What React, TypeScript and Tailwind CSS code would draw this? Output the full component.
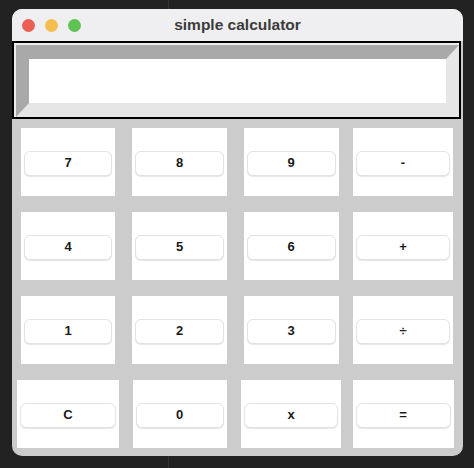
import React from "react";

const rows: { label: string; w: number }[][] = [
  [
    { label: "7", w: 94 },
    { label: "8", w: 95 },
    { label: "9", w: 95 },
    { label: "-", w: 100 },
  ],
  [
    { label: "4", w: 94 },
    { label: "5", w: 95 },
    { label: "6", w: 95 },
    { label: "+", w: 100 },
  ],
  [
    { label: "1", w: 94 },
    { label: "2", w: 95 },
    { label: "3", w: 95 },
    { label: "÷", w: 100 },
  ],
  [
    { label: "C", w: 102 },
    { label: "0", w: 94 },
    { label: "x", w: 100 },
    { label: "=", w: 101 },
  ],
];

export default function App() {
  return (
    <div
      className="relative w-[474px] h-[468px] bg-[#222222] overflow-hidden"
      style={{ fontFamily: '"Liberation Sans", Arial, sans-serif' }}
    >
      <div className="absolute left-[168px] top-0 h-full w-px bg-[#333333]" />
      <div className="relative ml-[12px] pt-[9px]">
        <div className="w-[451px] h-[447px] rounded-[10px] overflow-hidden bg-[#cccccc] flex flex-col">
          {/* title bar */}
          <div className="relative h-[32px] bg-[#efeff1] flex items-center shrink-0">
            <div className="flex items-center gap-[10px] pl-[10px]">
              <div className="w-[13px] h-[13px] rounded-full bg-[#ec5f57]" />
              <div className="w-[13px] h-[13px] rounded-full bg-[#f4bd4f]" />
              <div className="w-[13px] h-[13px] rounded-full bg-[#5fc353]" />
            </div>
            <div className="absolute inset-0 flex items-center justify-center text-[15.5px] font-bold text-[#3b3b3b]">
              simple calculator
            </div>
          </div>
          {/* display */}
          <div className="w-[449px] h-[78px] border-2 border-black bg-[#ececec] pt-[2px] pl-[2px] shrink-0">
            <div className="w-full h-full border-solid border-t-[14px] border-b-[14px] border-l-[13px] border-r-[13px] border-t-[#a9a9a9] border-l-[#a9a9a9] border-b-[#e6e6e6] border-r-[#e6e6e6] bg-white" />
          </div>
          {/* keypad */}
          <div className="pt-[1px] grid grid-cols-[112px_111px_112px_112px] grid-rows-[repeat(4,84px)]">
            {rows.flat().map((k, i) => (
              <div key={i} className="flex items-center justify-center">
                <div
                  className="h-[68px] bg-white flex items-center justify-center"
                  style={{ width: k.w }}
                >
                  <div
                    className="h-[25px] rounded-[6px] bg-white border border-[#e2e2e2] shadow-[0_1px_1px_rgba(0,0,0,0.10)] flex items-center justify-center text-[13px] font-bold text-[#1a1a1a] mt-[2px]"
                    style={{ width: k.w - 6 }}
                  >
                    {k.label}
                  </div>
                </div>
              </div>
            ))}
          </div>
        </div>
      </div>
    </div>
  );
}
